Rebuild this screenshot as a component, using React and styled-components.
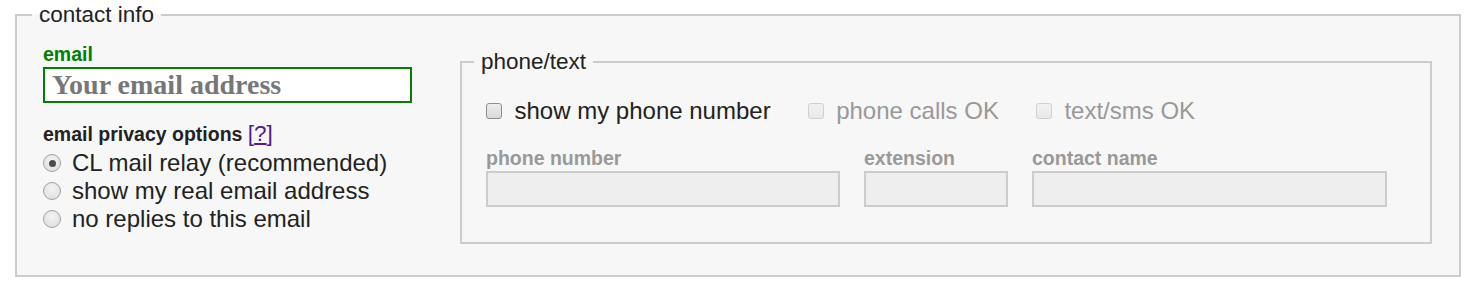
import React from 'react';
import styled, {createGlobalStyle} from 'styled-components';

const GlobalStyle = createGlobalStyle`
  html, body {
    margin: 0;
    padding: 0;
    background: #fff;
  }
  body {
    font-family: "Liberation Sans", Arial, sans-serif;
    color: #222;
  }
`;

const Page = styled.div`
  padding: 2px 12px 0 15px;
`;

const Fieldset = styled.fieldset`
  box-sizing: border-box;
  margin: ${p => (p.$inner ? '6px 0 0 0' : '0')};
  min-width: 0;
  border: 2px solid #ccc;
  background: ${p => (p.$inner ? 'transparent' : '#f7f7f7')};
  padding: ${p => (p.$inner ? '22px 24px 35px 24px' : '15px 27px 31px 26px')};
`;

const Legend = styled.legend`
  font-size: 22.5px;
  line-height: normal;
  color: #222;
  padding: 0 7px;
  margin-left: ${p => p.$offset}px;
`;

const Columns = styled.div`
  display: grid;
  grid-template-columns: 369px 972px;
  column-gap: 48px;
  align-items: start;
`;

const LeftColumn = styled.div`
  display: flex;
  flex-direction: column;
`;

const EmailLabel = styled.label`
  display: block;
  color: #008000;
  font-weight: bold;
  font-size: 19.5px;
  line-height: normal;
  margin-bottom: 1px;
`;

const EmailInput = styled.input`
  box-sizing: border-box;
  width: 369px;
  height: 36px;
  margin: 0;
  padding: 0 7px;
  border: 2px solid #008000;
  background: #fff;
  outline: none;
  font-family: "Liberation Serif", "Times New Roman", serif;
  font-weight: bold;
  font-size: 28px;
  color: #222;

  &::placeholder {
    color: #777;
    opacity: 1;
  }
`;

const PrivacyHeading = styled.div`
  margin: 18px 0 2px;
  font-weight: bold;
  font-size: 19.5px;
  line-height: normal;
`;

const Help = styled.span`
  font-weight: normal;
  font-size: 22.5px;
  color: #551a8b;

  a {
    color: #551a8b;
    text-decoration: underline;
  }
`;

const RadioRow = styled.label`
  display: flex;
  align-items: center;
  gap: 11px;
  font-size: 24px;
  line-height: normal;
`;

const Radio = styled.input.attrs({type: 'radio'})`
  appearance: none;
  box-sizing: border-box;
  width: 18px;
  height: 18px;
  margin: 0;
  border: 1px solid #a3a3a3;
  border-radius: 50%;
  background: radial-gradient(circle at 50% 35%, #f4f4f4 0%, #e2e2e2 70%, #d6d6d6 100%);
  position: relative;

  &:checked::after {
    content: '';
    position: absolute;
    left: 4.5px;
    top: 4.5px;
    width: 7px;
    height: 7px;
    border-radius: 50%;
    background: #4a4a4a;
  }
`;

const CheckRow = styled.div`
  display: flex;
  align-items: center;
  gap: 37px;
  font-size: 24px;
  line-height: normal;
`;

const CheckItem = styled.label`
  display: flex;
  align-items: center;
  gap: 12.5px;
  color: ${p => (p.$disabled ? '#999' : '#222')};
`;

const Checkbox = styled.input.attrs({type: 'checkbox'})`
  appearance: none;
  box-sizing: border-box;
  width: 16px;
  height: 16px;
  margin: 0;
  border-radius: 3px;
  border: 1px solid ${p => (p.disabled ? '#d0d0d0' : '#8e8e8e')};
  background: ${p =>
    p.disabled
      ? 'linear-gradient(#f2f2f2, #e9e9e9)'
      : 'linear-gradient(#ededed, #d9d9d9)'};
`;

const Fields = styled.div`
  display: grid;
  grid-template-columns: 354px 144px 355px;
  column-gap: 24px;
  margin-top: 22px;
`;

const Field = styled.div`
  display: flex;
  flex-direction: column;
`;

const FieldLabel = styled.label`
  color: #999;
  font-weight: bold;
  font-size: 19.5px;
  line-height: normal;
  margin-bottom: 1px;
`;

const FieldInput = styled.input`
  box-sizing: border-box;
  width: 100%;
  height: 36px;
  margin: 0;
  border: 2px solid #ccc;
  background: #eee;
  outline: none;
`;

const privacyOptions = [
  {value: 'relay', label: 'CL mail relay (recommended)'},
  {value: 'real', label: 'show my real email address'},
  {value: 'none', label: 'no replies to this email'},
];

const phoneFields = [
  {name: 'phone', label: 'phone number'},
  {name: 'ext', label: 'extension'},
  {name: 'contact', label: 'contact name'},
];

export default function App() {
  return (
    <Page>
      <GlobalStyle />
      <Fieldset>
        <Legend $offset={-11}>contact info</Legend>
        <Columns>
          <LeftColumn>
            <EmailLabel htmlFor="email">email</EmailLabel>
            <EmailInput id="email" placeholder="Your email address" />
            <PrivacyHeading>
              email privacy options <Help>[<a href="#help">?</a>]</Help>
            </PrivacyHeading>
            {privacyOptions.map(opt => (
              <RadioRow key={opt.value}>
                <Radio name="privacy" value={opt.value} defaultChecked={opt.value === 'relay'} />
                {opt.label}
              </RadioRow>
            ))}
          </LeftColumn>

          <Fieldset $inner>
            <Legend $offset={-12}>phone/text</Legend>
            <CheckRow>
              <CheckItem>
                <Checkbox />
                show my phone number
              </CheckItem>
              <CheckItem $disabled>
                <Checkbox disabled />
                phone calls OK
              </CheckItem>
              <CheckItem $disabled>
                <Checkbox disabled />
                text/sms OK
              </CheckItem>
            </CheckRow>
            <Fields>
              {phoneFields.map(f => (
                <Field key={f.name}>
                  <FieldLabel>{f.label}</FieldLabel>
                  <FieldInput disabled />
                </Field>
              ))}
            </Fields>
          </Fieldset>
        </Columns>
      </Fieldset>
    </Page>
  );
}
